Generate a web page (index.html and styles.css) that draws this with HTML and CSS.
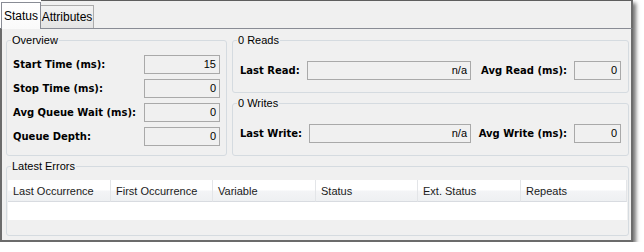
FILE: index.html
```html
<!DOCTYPE html>
<html lang="en">
<head>
    <meta charset="UTF-8">
    <title>Status</title>
    <link rel="stylesheet" href="styles.css">
</head>
<body>
    <div class="window">
        <div class="tabstrip">
            <div class="tab active">Status</div>
            <div class="tab-rest">
                <div class="tab">Attributes</div>
            </div>
        </div>

        <div class="pane">
            <div class="top-row">
                <fieldset class="group overview">
                    <legend>Overview</legend>
                    <div class="field-grid">
                        <label>Start Time (ms):</label><div class="value">15</div>
                        <label>Stop Time (ms):</label><div class="value">0</div>
                        <label>Avg Queue Wait (ms):</label><div class="value">0</div>
                        <label>Queue Depth:</label><div class="value">0</div>
                    </div>
                </fieldset>

                <div class="io-col">
                    <fieldset class="group io">
                        <legend>0 Reads</legend>
                        <div class="io-row">
                            <label>Last Read:</label><div class="value">n/a</div>
                            <label class="right">Avg Read (ms):</label><div class="value">0</div>
                        </div>
                    </fieldset>
                    <fieldset class="group io">
                        <legend>0 Writes</legend>
                        <div class="io-row">
                            <label>Last Write:</label><div class="value">n/a</div>
                            <label class="right">Avg Write (ms):</label><div class="value">0</div>
                        </div>
                    </fieldset>
                </div>
            </div>

            <fieldset class="group errors">
                <legend>Latest Errors</legend>
                <div class="list">
                    <div class="list-head">Last Occurrence</div>
                    <div class="list-head">First Occurrence</div>
                    <div class="list-head">Variable</div>
                    <div class="list-head">Status</div>
                    <div class="list-head">Ext. Status</div>
                    <div class="list-head">Repeats</div>
                    <div class="list-row"></div>
                </div>
            </fieldset>
        </div>
    </div>
</body>
</html>
```

FILE: styles.css
```css
* {
    box-sizing: border-box;
}

body {
    margin: 0;
    background: #fff;
    font-family: "Liberation Sans", Arial, sans-serif;
    font-size: 11px;
    color: #000;
}

.window {
    width: 633px;
    height: 242px;
    display: flex;
    flex-direction: column;
    box-shadow: 3px 3px 4px rgba(0, 0, 0, 0.55);
}

.tabstrip {
    display: flex;
    height: 28px;
    flex-shrink: 0;
}

.tab {
    height: 23px;
    width: 53px;
    padding-top: 4px;
    text-align: center;
    font-size: 12px;
    background: linear-gradient(#f3f3f3, #e4e4e4);
    border: 1px solid #acacac;
    border-left: none;
    border-bottom: none;
}

.tab.active {
    position: relative;
    z-index: 1;
    margin: 2px 0 0 1px;
    height: 27px;
    width: 40px;
    padding-top: 6px;
    background: linear-gradient(#ffffff, #fafafa);
    border: 1px solid #898c95;
    border-bottom: none;
}

.tab-rest {
    flex: 1;
    display: flex;
    align-items: flex-end;
    background: #f0f0f0;
    border-top: 1px solid #5e5e5e;
    border-right: 2px solid #6b6b6b;
}

.pane {
    flex: 1;
    background: #f0f0f0;
    border: 2px solid #6b6b6b;
    border-top: 1px solid #898c95;
    padding: 5px 2px 4px 4px;
    display: flex;
    flex-direction: column;
    gap: 4px;
}

.top-row {
    display: flex;
    gap: 5px;
    height: 122px;
}

.group {
    margin: 0;
    padding: 0;
    min-width: 0;
    border: 1px solid #d5dbe0;
    border-radius: 3px;
}

.group legend {
    margin-left: 4px;
    padding: 0 1px;
    line-height: 13px;
    font-size: 11px;
}

label {
    font-family: "DejaVu Sans", Verdana, sans-serif;
    font-weight: bold;
    font-size: 10px;
    white-space: nowrap;
}

.value {
    height: 19px;
    line-height: 17px;
    padding-right: 3px;
    text-align: right;
    border: 1px solid #a9a9a9;
    background: #f0f0f0;
}

.overview {
    width: 221px;
    flex-shrink: 0;
}

.field-grid {
    display: grid;
    grid-template-columns: 1fr 76px;
    grid-auto-rows: 19px;
    row-gap: 5px;
    align-items: center;
    padding: 8px 6px 0 6px;
}

.io-col {
    flex: 1;
    display: flex;
    flex-direction: column;
    gap: 4px;
}

.io {
    height: 59px;
}

.io-row {
    display: grid;
    grid-template-columns: auto 1fr 89px 47px;
    column-gap: 7px;
    align-items: center;
    padding: 14px 7px 0 7px;
}

.io-row .right {
    text-align: right;
}

.errors {
    flex: 1;
}

.list {
    display: grid;
    grid-template-columns: 103px 102px 103px 102px 103px 1fr;
    grid-template-rows: 22px 18px;
    margin: 7px 1px 0 1px;
}

.list-head {
    padding: 5px 0 0 5px;
    color: #1a1a1a;
    background: linear-gradient(#ffffff 0%, #ffffff 45%, #f3f4f6 55%, #eef0f2 100%);
    border-right: 1px solid #e3e5e8;
    border-bottom: 1px solid #d8dbe0;
}

.list-head:last-of-type {
    border-right: none;
}

.list-row {
    grid-column: 1 / -1;
    background: #fff;
}
```
